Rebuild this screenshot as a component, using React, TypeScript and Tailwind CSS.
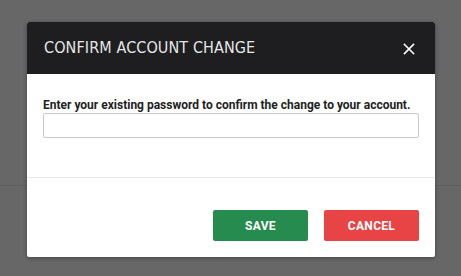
import React from "react";

export default function App() {
  return (
    <div className="relative w-[461px] h-[276px] bg-[#676767] overflow-hidden" style={{ fontFamily: "Roboto, sans-serif" }}>
      <div className="flex flex-col h-full">
        <div className="h-[185px]" />
        <div className="h-px bg-[#5e5e5e]" />
      </div>
      <div className="absolute left-[27px] top-[22px] w-[408px] bg-white rounded-[2px] shadow-[0_1px_4px_rgba(0,0,0,0.35)] overflow-hidden">
        <div className="h-[52px] bg-[#1e1e20] flex items-center justify-between pl-[17px] pr-[20px]">
          <span className="text-[#e6e6e6] text-[16px] tracking-[0.1px] font-normal" style={{ fontFamily: "'DejaVu Sans Condensed', 'DejaVu Sans', sans-serif" }}>CONFIRM ACCOUNT CHANGE</span>
          <svg width="12" height="12" viewBox="0 0 12 12" className="mt-[1px]">
            <path d="M1.5 1.5 L10.5 10.5 M10.5 1.5 L1.5 10.5" stroke="#ffffff" strokeWidth="1.6" strokeLinecap="square" />
          </svg>
        </div>
        <div className="h-[104px] px-4 pt-[24px] border-b border-[#e6e6e6]">
          <div className="text-[12px] leading-[14px] font-bold text-[#222222]">Enter your existing password to confirm the change to your account.</div>
          <input type="password" className="block mt-[1px] w-full h-[25px] border border-[#c8c8c8] rounded-[2px] outline-none" />
        </div>
        <div className="flex justify-end gap-4 px-4 pt-[32px] pb-[16px]">
          <button className="w-[95px] h-[31px] rounded-[2px] bg-[#258b4f] text-white text-[12px] font-bold tracking-[0.3px]">SAVE</button>
          <button className="w-[95px] h-[31px] rounded-[2px] bg-[#e84345] text-white text-[12px] font-bold tracking-[0.3px]">CANCEL</button>
        </div>
      </div>
    </div>
  );
}
